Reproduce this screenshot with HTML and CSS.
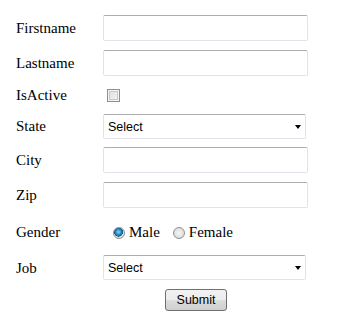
FILE: index.html
```html
<!DOCTYPE html>
<html>
<head>
<meta charset="utf-8">
<link rel="stylesheet" href="styles.css">
</head>
<body>
<form class="form">
  <label class="lbl">Firstname</label>
  <div class="field"><input class="txt" type="text"></div>

  <label class="lbl">Lastname</label>
  <div class="field"><input class="txt" type="text"></div>

  <label class="lbl">IsActive</label>
  <div class="field"><input class="chk" type="checkbox"></div>

  <label class="lbl">State</label>
  <div class="field"><span class="sel-wrap"><select class="sel"><option>Select</option></select></span></div>

  <label class="lbl">City</label>
  <div class="field"><input class="txt" type="text"></div>

  <label class="lbl">Zip</label>
  <div class="field"><input class="txt" type="text"></div>

  <label class="lbl">Gender</label>
  <div class="field radios">
    <label class="opt"><input class="rad" type="radio" name="g" checked>Male</label>
    <label class="opt"><input class="rad" type="radio" name="g">Female</label>
  </div>

  <label class="lbl">Job</label>
  <div class="field"><span class="sel-wrap"><select class="sel"><option>Select</option></select></span></div>

  <div class="actions"><button class="btn" type="button">Submit</button></div>
</form>
</body>
</html>
```

FILE: styles.css
```css
html, body {
  margin: 0;
  padding: 0;
  background: #ffffff;
}
body {
  font-family: "Liberation Serif", "Times New Roman", serif;
  font-size: 15px;
  color: #000000;
}
.form {
  display: grid;
  grid-template-columns: 87px 205px;
  grid-template-rows: 26px 26px 20px 24px 26px 26px 29px 25px 22px;
  row-gap: 9px;
  padding: 15px 0 0 16px;
  margin: 0;
}
.lbl {
  display: flex;
  align-items: center;
  padding-top: 1px;
}
.field {
  display: flex;
  align-items: center;
}
.txt {
  box-sizing: border-box;
  width: 205px;
  height: 26px;
  margin: 0;
  border: 1px solid #e2e3ea;
  border-top-color: #abadb3;
  border-radius: 2px;
  padding: 0 4px;
  background: #fff;
  outline: none;
}
.chk {
  -webkit-appearance: none;
  appearance: none;
  box-sizing: border-box;
  width: 13px;
  height: 13px;
  margin: 1px 0 0 4px;
  border: 1px solid #8e8f8f;
  background: linear-gradient(135deg, #dcdcdc 0%, #f6f6f6 100%);
  box-shadow: inset 0 0 0 1px #f4f4f4, inset 0 0 0 2px #c9c9c9;
}
.sel-wrap {
  position: relative;
  display: inline-block;
}
.sel-wrap::after {
  content: "";
  position: absolute;
  right: 5px;
  top: 11px;
  border-left: 3px solid transparent;
  border-right: 3px solid transparent;
  border-top: 4px solid #000;
  pointer-events: none;
}
.sel {
  -webkit-appearance: none;
  appearance: none;
  box-sizing: border-box;
  width: 203px;
  height: 25px;
  margin: 0;
  padding: 1px 0 0 4px;
  border: 1px solid #e2e3ea;
  border-top-color: #abadb3;
  border-radius: 2px;
  background: #fff;
  font-family: "Liberation Sans", Arial, sans-serif;
  font-size: 12.5px;
  color: #000;
}
.radios {
  padding-left: 10px;
  gap: 13px;
  padding-top: 2px;
}
.opt {
  display: flex;
  align-items: center;
}
.rad {
  -webkit-appearance: none;
  appearance: none;
  box-sizing: border-box;
  width: 12px;
  height: 12px;
  margin: 0 4px 0 0;
  border: 1px solid #8e8f8f;
  border-radius: 50%;
  background: radial-gradient(circle at 50% 50%, #f4f4f4 0%, #d6d6d6 100%);
}
.rad:checked {
  background: radial-gradient(circle at 45% 40%, #8fd3f4 0%, #1b8cc8 35%, #104f7a 55%, #e7e7e7 58%, #d0d0d0 100%);
}
.actions {
  grid-column: 1 / 3;
  padding-left: 149px;
  display: flex;
  align-items: stretch;
}
.btn {
  box-sizing: border-box;
  width: 62px;
  height: 22px;
  margin: 0;
  padding: 0 0 1px 0;
  border: 1px solid #707070;
  border-radius: 3px;
  background: linear-gradient(#f2f2f2 0%, #ebebeb 50%, #dddddd 51%, #cfcfcf 100%);
  font-family: "Liberation Sans", Arial, sans-serif;
  font-size: 12.5px;
  color: #000;
}
```
